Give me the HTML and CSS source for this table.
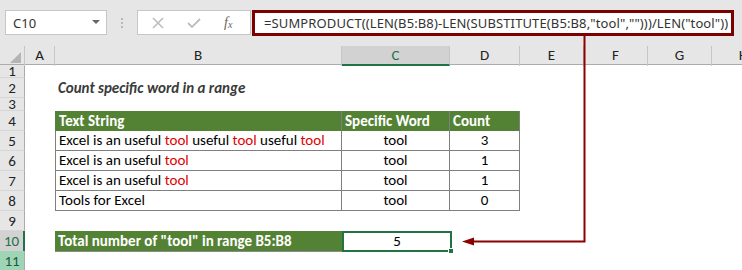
FILE: index.html
```html
<!DOCTYPE html>
<html>
<head>
<meta charset="utf-8">
<link rel="stylesheet" href="styles.css">
</head>
<body>
<div class="app">
  <div class="toolbar">
    <div class="namebox"><span class="nb-text">C10</span><span class="nb-arrow"></span></div>
    <div class="grip"><i></i><i></i><i></i></div>
    <div class="btns">
      <svg class="ico" width="14" height="14" viewBox="0 0 14 14"><path d="M2 2 L12 12 M12 2 L2 12" stroke="#bdbdbd" stroke-width="1.6" fill="none"/></svg>
      <svg class="ico" width="16" height="14" viewBox="0 0 16 14"><path d="M2 7 L6 11 L14 3" stroke="#bdbdbd" stroke-width="1.8" fill="none"/></svg>
      <span class="fx">f<sub>x</sub></span>
    </div>
    <div class="formula">=SUMPRODUCT((LEN(B5:B8)-LEN(SUBSTITUTE(B5:B8,"tool","")))/LEN("tool"))</div>
  </div>

  <div class="sheet">
    <div class="row hdr">
      <div class="corner"><span class="tri"></span></div>
      <div class="ch">A</div><div class="ch">B</div><div class="ch sel">C</div><div class="ch">D</div><div class="ch">E</div><div class="ch">F</div><div class="ch">G</div><div class="ch">H</div>
    </div>
    <div class="row r-short"><div class="rh">1</div><div></div><div></div><div></div><div></div><div></div><div></div><div></div><div></div></div>
    <div class="row"><div class="rh">2</div><div></div><div class="title">Count specific word in a range</div><div></div><div></div><div></div><div></div><div></div><div></div></div>
    <div class="row r-short"><div class="rh">3</div><div></div><div></div><div></div><div></div><div></div><div></div><div></div><div></div></div>
    <div class="row"><div class="rh">4</div><div></div><div class="th first">Text String</div><div class="th">Specific Word</div><div class="th">Count</div><div></div><div></div><div></div><div></div></div>
    <div class="row"><div class="rh">5</div><div></div><div class="td first">Excel is an useful <span class="red">tool</span> useful <span class="red">tool</span> useful <span class="red">tool</span></div><div class="td c">tool</div><div class="td c">3</div><div></div><div></div><div></div><div></div></div>
    <div class="row"><div class="rh">6</div><div></div><div class="td first">Excel is an useful <span class="red">tool</span></div><div class="td c">tool</div><div class="td c">1</div><div></div><div></div><div></div><div></div></div>
    <div class="row"><div class="rh">7</div><div></div><div class="td first">Excel is an useful <span class="red">tool</span></div><div class="td c">tool</div><div class="td c">1</div><div></div><div></div><div></div><div></div></div>
    <div class="row"><div class="rh">8</div><div></div><div class="td first">Tools for Excel</div><div class="td c">tool</div><div class="td c">0</div><div></div><div></div><div></div><div></div></div>
    <div class="row"><div class="rh">9</div><div></div><div></div><div></div><div></div><div></div><div></div><div></div><div></div></div>
    <div class="row"><div class="rh rsel">10</div><div></div><div class="total">Total number of "tool" in range B5:B8</div><div class="active">5<span class="handle"></span></div><div></div><div></div><div></div><div></div><div></div></div>
    <div class="row"><div class="rh rmint">11</div><div></div><div></div><div></div><div></div><div></div><div></div><div></div><div></div></div>
  </div>

  <svg class="arrow" width="742" height="270" viewBox="0 0 742 270">
    <path d="M584.5 36 V241.5 H470" stroke="#8b0000" stroke-width="2" fill="none"/>
    <path d="M462 241.5 L474 237.5 L474 245.5 Z" fill="#8b0000"/>
  </svg>
</div>
</body>
</html>
```

FILE: styles.css
```css
* { box-sizing: border-box; }
html, body { margin: 0; padding: 0; background: #ffffff; }
body { width: 742px; height: 270px; overflow: hidden; font-family: Carlito, Calibri, Lato, sans-serif; }
.app { position: relative; width: 742px; height: 270px; overflow: hidden; }

.toolbar {
  height: 46px;
  background: #e6e6e6;
  display: flex;
  align-items: flex-start;
  padding: 10px 0 0 5px;
}
.namebox {
  width: 102px; height: 25px;
  background: #fff;
  border: 1px solid #c6c6c6;
  display: flex; align-items: center; justify-content: space-between;
  padding: 0 6px 0 7px;
  font-family: "Noto Sans", "Open Sans", sans-serif;
  font-size: 13px; color: #333;
}
.nb-arrow {
  width: 0; height: 0;
  border-left: 4px solid transparent; border-right: 4px solid transparent;
  border-top: 4px solid #666;
  margin-top: -2px;
}
.grip {
  width: 30px; height: 25px;
  display: flex; flex-direction: column; align-items: center; justify-content: center; gap: 2px;
}
.grip i { display: block; width: 2px; height: 2px; background: #b8b8b8; }
.btns {
  width: 114px; height: 25px;
  background: #fff;
  border: 1px solid #c6c6c6;
  display: flex; align-items: center;
  padding-left: 13px; gap: 21px;
}
.fx { font-family: "Liberation Serif", serif; font-style: italic; font-size: 14px; color: #666; margin-left: 1px; }
.fx sub { font-size: 10px; vertical-align: -1px; }
.formula {
  width: 482px; height: 26px;
  margin-left: 1px;
  background: #fff;
  border: 3px solid #7b0000;
  padding: 0 0 0 9px;
  font-family: "Noto Sans", "Open Sans", sans-serif;
  font-size: 13px; line-height: 20px; color: #333;
  letter-spacing: 0.12px;
  white-space: nowrap; overflow: hidden;
}

.sheet { display: flex; flex-direction: column; }
.row {
  display: grid;
  grid-template-columns: 25px 30px 287px 108px 70px 64px 64px 64px 64px;
  height: 20px;
  font-size: 15px;
  color: #000;
}
.row.r-short { height: 13px; }
.row.hdr { height: 19px; background: #e6e6e6; border-bottom: 1px solid #ababab; }

.corner { position: relative; border-right: 1px solid #c6c6c6; }
.tri {
  position: absolute; right: 3px; bottom: 3px;
  width: 0; height: 0;
  border-left: 11px solid transparent;
  border-bottom: 11px solid #b4b4b4;
}
.ch {
  border-right: 1px solid #c6c6c6;
  text-align: center; font-size: 15px; line-height: 18px; color: #222;
}
.ch.sel { background: #d2d2d2; border-bottom: 2px solid #217346; color: #217346; }

.rh {
  background: #e6e6e6;
  border-right: 1px solid #ababab;
  border-bottom: 1px solid #d6d6d6;
  text-align: center; font-size: 15px; line-height: 20px; color: #222;
  overflow: hidden;
}
.r-short .rh { line-height: 12px; }
.rh.rsel { background: #d2d2d2; color: #217346; border-right: 2px solid #217346; }
.rh.rmint { background: #9fd5b7; color: #1e5a3a; }

.title {
  font-style: italic; font-weight: bold; color: #3a3a3a;
  padding-left: 3px; line-height: 20px; white-space: nowrap;
}
.th {
  background: #548235; color: #fff; font-weight: bold;
  padding-left: 3px; line-height: 20px;
  border-right: 1px solid #7f7f7f;
  white-space: nowrap;
}
.th.first { border-left: 1px solid #548235; }
.td {
  border-right: 1px solid #7f7f7f;
  border-bottom: 1px solid #7f7f7f;
  padding-left: 3px; line-height: 19px;
  white-space: nowrap;
}
.td.first { border-left: 1px solid #7f7f7f; }
.td.c { text-align: center; padding-left: 0; }
.red { color: #e00000; }

.total {
  background: #548235; color: #fff; font-weight: bold;
  padding-left: 3px; line-height: 20px;
  border-bottom: 1px solid #8a8a8a;
  white-space: nowrap;
}
.active {
  position: relative;
  border: 2px solid #217346;
  text-align: center; line-height: 16px;
  margin-right: -2px;
}
.handle {
  position: absolute; right: -4px; bottom: -4px;
  width: 6px; height: 6px;
  background: #217346; border: 1px solid #fff;
}

.arrow { position: absolute; left: 0; top: 0; pointer-events: none; }
```
